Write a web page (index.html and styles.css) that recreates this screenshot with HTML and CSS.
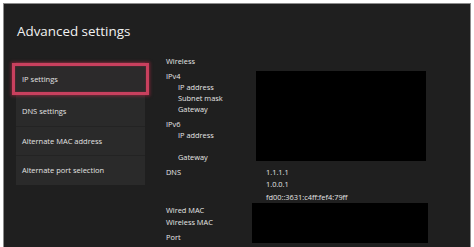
FILE: index.html
```html
<!DOCTYPE html>
<html>
<head>
<meta charset="utf-8">
<link rel="stylesheet" href="styles.css">
</head>
<body>
<div class="frame">
  <h1 class="title">Advanced settings</h1>
  <div class="content">
    <div class="menu">
      <div class="item focused">IP settings</div>
      <div class="item">DNS settings</div>
      <div class="item sep">Alternate MAC address</div>
      <div class="item sep">Alternate port selection</div>
    </div>
    <div class="labels">
      <div class="row">Wireless</div>
      <div class="group">
        <div class="row">IPv4</div>
        <div class="row sub">IP address</div>
        <div class="row sub">Subnet mask</div>
        <div class="row sub">Gateway</div>
      </div>
      <div class="group">
        <div class="row">IPv6</div>
        <div class="row sub">IP address</div>
        <div class="row sub"></div>
        <div class="row sub">Gateway</div>
      </div>
      <div class="group">
        <div class="row">DNS</div>
      </div>
      <div class="group mac">
        <div class="row">Wired MAC</div>
        <div class="row mac2">Wireless MAC</div>
      </div>
      <div class="group">
        <div class="row">Port</div>
      </div>
    </div>
    <div class="values">
      <div class="redact r1"></div>
      <div class="dns">
        <div class="vrow">1.1.1.1</div>
        <div class="vrow">1.0.0.1</div>
        <div class="vrow">fd00::3631:c4ff:fef4:79ff</div>
      </div>
      <div class="redact r2"></div>
    </div>
  </div>
</div>
</body>
</html>
```

FILE: styles.css
```css
html, body {
  margin: 0;
  padding: 0;
  background: #ffffff;
}
body {
  width: 474px;
  height: 247px;
  overflow: hidden;
  font-family: "Open Sans", "Noto Sans", sans-serif;
  color: #e6e6e6;
}
.frame {
  margin: 3px 0 0 3px;
  width: 466px;
  height: 250px;
  background: #1f1f1f;
  border: 1px solid #8c8c8c;
  border-bottom: none;
  display: flex;
  flex-direction: column;
}
.title {
  margin: 0;
  padding: 17px 0 0 13px;
  height: 20px;
  line-height: 20px;
  font-size: 13.4px;
  font-weight: 400;
  color: #f2f2f2;
}
.content {
  display: flex;
}
.menu {
  margin: 21px 0 0 12px;
  width: 129px;
  height: 123px;
  background: #2a2a2a;
  display: flex;
  flex-direction: column;
}
.item {
  height: 29px;
  line-height: 29px;
  padding-left: 6px;
  font-size: 7.5px;
  color: #e2e2e2;
}
.item.sep {
  border-top: 1px solid #232323;
  height: 28px;
}
.item.focused {
  margin: 1px -4px 2px;
  height: 26px;
  line-height: 26px;
  padding-left: 7px;
  border: 3px solid #c9405e;
  background: #2c2a2b;
  box-shadow: 0 0 3px 1px rgba(190, 40, 70, 0.55), inset 0 0 2px rgba(190, 40, 70, 0.5);
}
.labels {
  margin-left: 21px;
  width: 86px;
  padding-top: 14.5px;
  font-size: 7.4px;
  color: #e6e6e6;
}
.row {
  height: 11px;
  line-height: 11px;
  white-space: nowrap;
}
.row.sub {
  padding-left: 12px;
}
.group {
  margin-top: 4px;
}
.group.mac {
  margin-top: 27px;
}
.row.mac2 {
  height: 12px;
  line-height: 13px;
}
.values {
  display: flex;
  flex-direction: column;
}
.redact {
  background: #000000;
}
.r1 {
  margin: 30px 0 0 4px;
  width: 170px;
  height: 90px;
}
.dns {
  margin-top: 4.75px;
  padding-left: 14px;
  font-size: 7.4px;
  color: #e6e6e6;
}
.vrow {
  height: 12.5px;
  line-height: 12.5px;
  white-space: nowrap;
}
.r2 {
  width: 176px;
  height: 40px;
}
```
